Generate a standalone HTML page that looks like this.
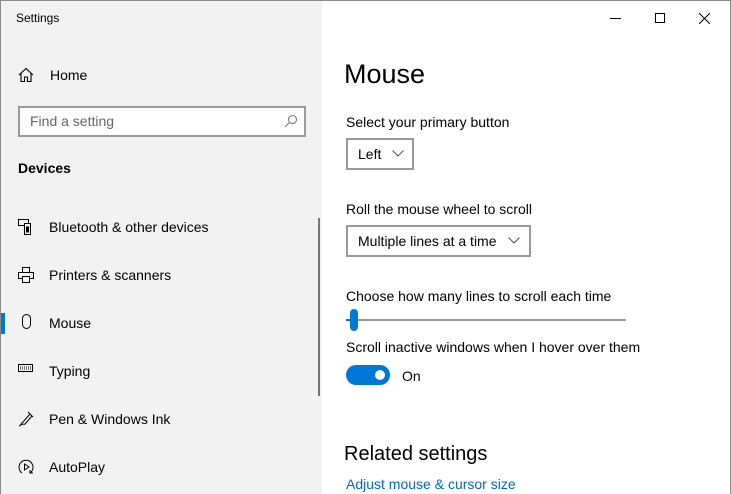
<!DOCTYPE html>
<html><head><meta charset="utf-8"><style>
*{margin:0;padding:0;box-sizing:border-box}
body{width:731px;height:494px;overflow:hidden;background:#fff;font-family:"Liberation Sans",sans-serif;color:#000;position:relative}
.frame{position:absolute;left:0;top:0;width:731px;height:494px;border:1px solid #8a8a8a;border-bottom:none}
.left{position:absolute;left:1px;top:1px;width:321px;height:493px;background:#f2f2f2}
.t{position:absolute;white-space:nowrap;font-size:14px}
.nav{position:absolute;left:49px;font-size:14px;color:#000}
.ic{position:absolute;left:18px}
</style></head><body>
<div class="left"></div>
<div class="frame"></div>
<div class="t" style="left:16px;top:11px;font-size:12px">Settings</div>
<!-- window controls -->
<div style="position:absolute;left:610px;top:18px;width:11px;height:1px;background:#000"></div>
<div style="position:absolute;left:655px;top:13px;width:10px;height:10px;border:1px solid #000"></div>
<svg style="position:absolute;left:699px;top:13px" width="11" height="11"><path d="M0 0L11 11M11 0L0 11" stroke="#000" stroke-width="1"/></svg>
<!-- home -->
<svg class="ic" style="top:67px" width="16" height="16" viewBox="0 0 16 16" fill="none" stroke="#000" stroke-width="1.1"><path d="M1 8L8 1.5L15 8M3 6.5V14.5H6.5V10H9.5V14.5H13V6.5"/></svg>
<div class="t" style="left:50px;top:67px">Home</div>
<!-- search -->
<div style="position:absolute;left:18px;top:106px;width:288px;height:31px;border:2px solid #999;background:#fff"></div>
<div class="t" style="left:30px;top:113px;color:#666">Find a setting</div>
<svg style="position:absolute;left:284px;top:114px" width="14" height="14" fill="none" stroke="#777" stroke-width="1.1"><circle cx="8.5" cy="5.5" r="4"/><path d="M5.5 8.5L1 13"/></svg>
<div class="t" style="left:18px;top:160px;font-weight:bold">Devices</div>
<!-- items -->
<svg class="ic" style="top:219px" width="16" height="16" fill="none" stroke="#000" stroke-width="1"><rect x="0.5" y="0.5" width="10" height="6"/><rect x="6.5" y="4.5" width="6" height="11" fill="#f2f2f2"/><rect x="8.5" y="8" width="2" height="5" fill="#000"/></svg>
<div class="nav" style="top:219px">Bluetooth &amp; other devices</div>
<svg class="ic" style="top:267px" width="16" height="16" fill="none" stroke="#000" stroke-width="1"><rect x="4.5" y="0.5" width="7" height="5"/><rect x="0.5" y="5.5" width="15" height="6"/><rect x="4.5" y="9.5" width="7" height="6" fill="#f2f2f2"/></svg>
<div class="nav" style="top:267px">Printers &amp; scanners</div>
<div style="position:absolute;left:1px;top:313px;width:4px;height:21px;background:#0078d7"></div>
<svg class="ic" style="top:314px" width="16" height="17" fill="none" stroke="#000" stroke-width="1"><rect x="4.5" y="0.5" width="8" height="14" rx="4"/></svg>
<div class="nav" style="top:315px">Mouse</div>
<svg class="ic" style="top:364px" width="16" height="10" fill="none" stroke="#000" stroke-width="1"><rect x="0.5" y="0.5" width="14" height="7"/><path d="M2 3H13M2 5H13" stroke-dasharray="1 1"/></svg>
<div class="nav" style="top:363px">Typing</div>
<svg class="ic" style="top:411px" width="16" height="17" fill="none" stroke="#000" stroke-width="1"><path d="M1 15C3 15 3 12 5 11L12 3L14 5L7 13C6 14 5 12 3 14M10 1L15 6"/></svg>
<div class="nav" style="top:411px">Pen &amp; Windows Ink</div>
<svg class="ic" style="top:459px" width="17" height="17" fill="none" stroke="#000" stroke-width="1"><path d="M4 14A7 7 0 1 1 12 14"/><path d="M6.5 5V11L11 8Z"/><path d="M12 11V14H15"/></svg>
<div class="nav" style="top:459px">AutoPlay</div>
<!-- scrollbar -->
<div style="position:absolute;left:318px;top:218px;width:2px;height:178px;background:#777"></div>
<!-- right -->
<div class="t" style="left:344px;top:59px;font-size:27px">Mouse</div>
<div class="t" style="left:346px;top:114px">Select your primary button</div>
<div style="position:absolute;left:346px;top:138px;width:68px;height:32px;border:2px solid #999"></div>
<div class="t" style="left:358px;top:146px">Left</div>
<svg style="position:absolute;left:392px;top:150px" width="12" height="7" fill="none" stroke="#555"><path d="M0.5 0.5L6 6L11.5 0.5"/></svg>
<div class="t" style="left:346px;top:201px">Roll the mouse wheel to scroll</div>
<div style="position:absolute;left:346px;top:225px;width:185px;height:32px;border:2px solid #999"></div>
<div class="t" style="left:358px;top:233px">Multiple lines at a time</div>
<svg style="position:absolute;left:508px;top:237px" width="12" height="7" fill="none" stroke="#555"><path d="M0.5 0.5L6 6L11.5 0.5"/></svg>
<div class="t" style="left:346px;top:288px">Choose how many lines to scroll each time</div>
<div style="position:absolute;left:346px;top:319px;width:280px;height:2px;background:#999"></div>
<div style="position:absolute;left:346px;top:319px;width:8px;height:2px;background:#0078d7"></div>
<div style="position:absolute;left:350px;top:309px;width:8px;height:22px;border-radius:4px;background:#0078d7"></div>
<div class="t" style="left:346px;top:339px">Scroll inactive windows when I hover over them</div>
<div style="position:absolute;left:346px;top:365px;width:44px;height:20px;border-radius:10px;background:#0078d7"></div>
<div style="position:absolute;left:375px;top:370px;width:10px;height:10px;border-radius:5px;background:#fff"></div>
<div class="t" style="left:402px;top:368px">On</div>
<div class="t" style="left:344px;top:443px;font-size:20px">Related settings</div>
<div class="t" style="left:346px;top:476px;color:#0067c0">Adjust mouse &amp; cursor size</div>
</body></html>
